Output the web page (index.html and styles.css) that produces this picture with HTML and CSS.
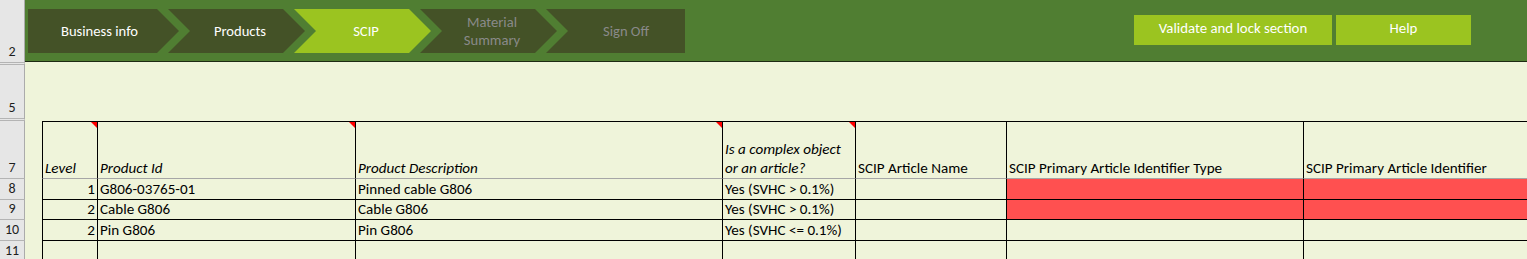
FILE: index.html
```html
<!DOCTYPE html>
<html lang="en">
<head>
<meta charset="utf-8">
<title>SCIP</title>
<link rel="stylesheet" href="styles.css">
</head>
<body>
<div class="sheet">
  <div class="row r2">
    <div class="rh">2</div>
    <div class="banner">
      <nav class="steps">
        <div class="step first done"><span>Business info</span></div>
        <div class="step done"><span>Products</span></div>
        <div class="step active"><span>SCIP</span></div>
        <div class="step off"><span>Material<br>Summary</span></div>
        <div class="step off last"><span>Sign Off</span></div>
      </nav>
      <div class="actions">
        <button class="btn validate">Validate and lock section</button>
        <button class="btn help">Help</button>
      </div>
    </div>
  </div>

  <div class="row r5">
    <div class="rh">5</div>
    <div class="blank"></div>
  </div>

  <div class="row grid r7">
    <div class="rh">7</div>
    <div class="ca"></div>
    <div class="c hd lvl it note">Level</div>
    <div class="c hd it note">Product Id</div>
    <div class="c hd it note">Product Description</div>
    <div class="c hd it note">Is a complex object<br>or an article?</div>
    <div class="c hd">SCIP Article Name</div>
    <div class="c hd">SCIP Primary Article Identifier Type</div>
    <div class="c hd last">SCIP Primary Article Identifier</div>
  </div>

  <div class="row grid r8">
    <div class="rh">8</div>
    <div class="ca"></div>
    <div class="c lvl num">1</div>
    <div class="c">G806-03765-01</div>
    <div class="c">Pinned cable G806</div>
    <div class="c">Yes (SVHC &gt; 0.1%)</div>
    <div class="c"></div>
    <div class="c red"></div>
    <div class="c red last"></div>
  </div>

  <div class="row grid r9">
    <div class="rh">9</div>
    <div class="ca"></div>
    <div class="c lvl num">2</div>
    <div class="c">Cable G806</div>
    <div class="c">Cable G806</div>
    <div class="c">Yes (SVHC &gt; 0.1%)</div>
    <div class="c"></div>
    <div class="c red"></div>
    <div class="c red last"></div>
  </div>

  <div class="row grid r10">
    <div class="rh">10</div>
    <div class="ca"></div>
    <div class="c lvl num">2</div>
    <div class="c">Pin G806</div>
    <div class="c">Pin G806</div>
    <div class="c">Yes (SVHC &lt;= 0.1%)</div>
    <div class="c"></div>
    <div class="c"></div>
    <div class="c last"></div>
  </div>

  <div class="row grid r11">
    <div class="rh">11</div>
    <div class="ca"></div>
    <div class="c lvl"></div>
    <div class="c"></div>
    <div class="c"></div>
    <div class="c"></div>
    <div class="c"></div>
    <div class="c"></div>
    <div class="c last"></div>
  </div>
</div>
</body>
</html>
```

FILE: styles.css
```css
* { box-sizing: border-box; }

html, body {
  margin: 0;
  padding: 0;
  background: #eff4da;
  overflow: hidden;
}

body {
  font-family: "Carlito", "Lato", "Liberation Sans", sans-serif;
  font-size: 15.1px;
  color: #000;
}

.sheet {
  display: flex;
  flex-direction: column;
  width: 1527px;
}

.row {
  display: flex;
}

.rh {
  flex: 0 0 25px;
  width: 25px;
  background: #e6e6e6;
  border-right: 1px solid #ababab;
  border-bottom: 1px solid #b4b4b4;
  display: flex;
  align-items: flex-end;
  justify-content: center;
  font-size: 14px;
  line-height: 18px;
  color: #1e1e1e;
  padding-bottom: 1px;
}

/* row 2 : banner */
.r2 { height: 62px; }
.r2 .rh { border-bottom: none; }

.banner {
  flex: 1;
  background: #507e32;
  border-bottom: 1px solid #1d2a12;
  display: flex;
  justify-content: space-between;
  align-items: flex-start;
  padding: 9px 56px 0 3px;
}

.steps {
  display: flex;
}

.step {
  width: 137px;
  height: 44px;
  margin-left: -11px;
  background: #445227;
  color: #fff;
  font-size: 14.6px;
  display: flex;
  align-items: center;
  justify-content: center;
  text-align: center;
  line-height: 18px;
  padding-left: 7px;
  clip-path: polygon(0 0, calc(100% - 22px) 0, 100% 50%, calc(100% - 22px) 100%, 0 100%, 22px 50%);
}

.step.first {
  width: 151px;
  margin-left: 0;
  padding-left: 0;
  padding-right: 8px;
  clip-path: polygon(0 0, calc(100% - 22px) 0, 100% 50%, calc(100% - 22px) 100%, 0 100%);
}

.step.last {
  width: 139px;
  padding-left: 21px;
  clip-path: polygon(0 0, 100% 0, 100% 100%, 0 100%, 22px 50%);
}

.step.active { background: #9bc420; }
.step.off { color: #8a8a8a; }

.actions {
  display: flex;
  gap: 4px;
  margin-top: 6px;
}

.btn {
  height: 30px;
  border: none;
  background: #9bc420;
  color: #fff;
  font-family: inherit;
  font-size: 14.8px;
  padding: 0 0 4px;
  margin: 0;
}

.btn.validate { width: 198px; }
.btn.help { width: 135px; }

/* row 5 */
.r5 { height: 59px; }
.r5 .rh {
  border-top: 3px double #b4b4b4;
  border-bottom: 3px double #b4b4b4;
}
.blank { flex: 1; }

/* table rows */
.grid {
  display: grid;
  grid-template-columns: 25px 17px 56px 258px 367px 133px 151px 297px 1fr;
}

.r7 { height: 58px; }
.r8 { height: 21px; }
.r9 { height: 20px; }
.r10 { height: 21px; }
.r11 { height: 21px; }

.ca { background: #eff4da; }

.c {
  position: relative;
  border-right: 1px solid #000;
  border-bottom: 1px solid #000;
  display: flex;
  flex-direction: column;
  justify-content: flex-end;
  padding: 0 2px 0 2px;
  line-height: 19px;
  white-space: nowrap;
  overflow: hidden;
}

.c.lvl { border-left: 1px solid #000; }
.c.last { border-right: none; }
.c.num { align-items: flex-end; text-align: right; }

.r7 .c {
  border-top: 1px solid #000;
  border-bottom: 1px solid #a6a6a6;
  padding-bottom: 0;
}

.c.it { font-style: italic; }

.c.note::after {
  content: "";
  position: absolute;
  top: 0;
  right: 0;
  border-top: 6px solid #ff0000;
  border-left: 6px solid transparent;
}

.c.red { background: #ff5050; }
```
